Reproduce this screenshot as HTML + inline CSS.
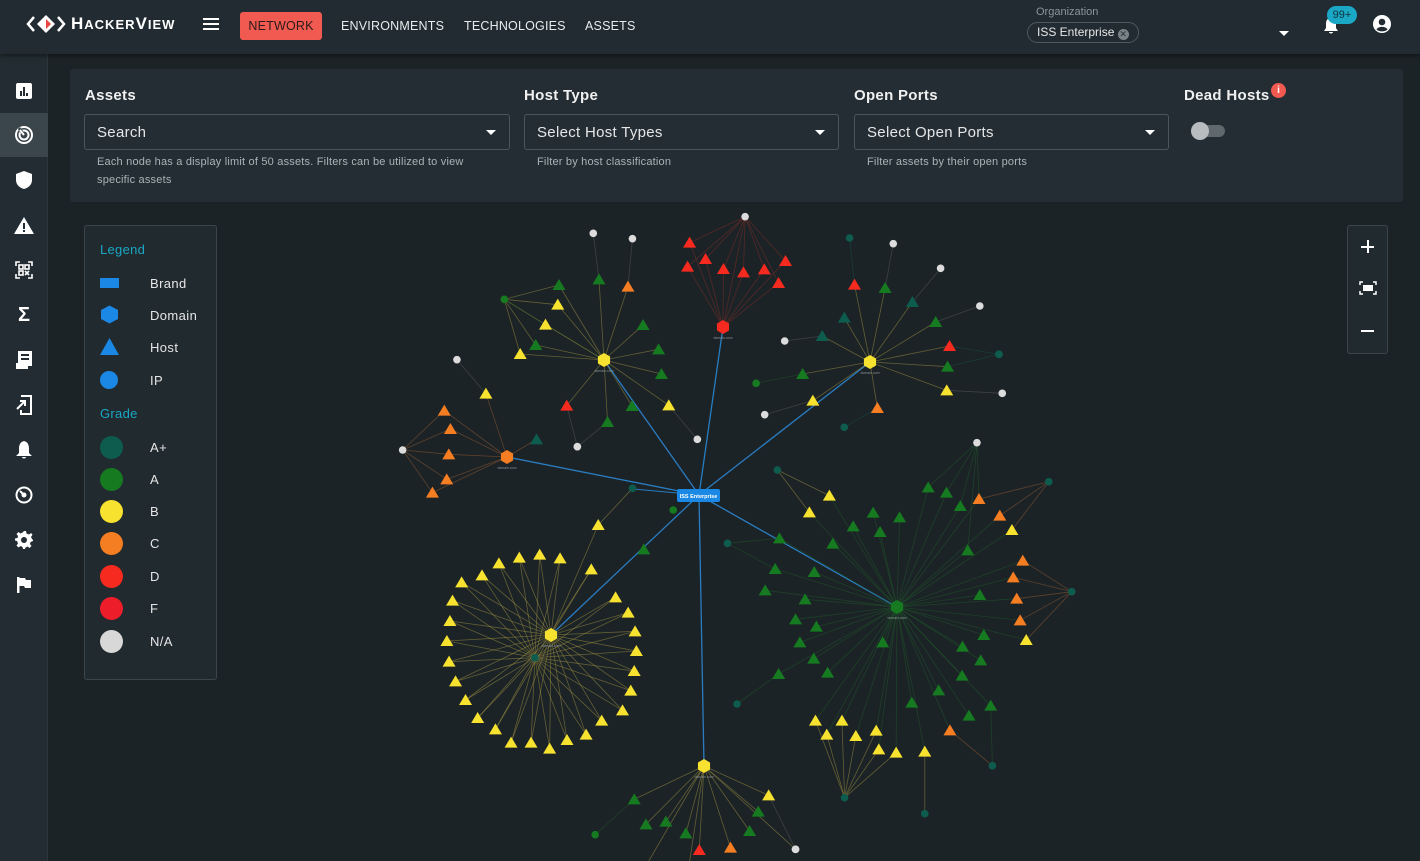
<!DOCTYPE html>
<html><head><meta charset="utf-8">
<style>
*{box-sizing:border-box;margin:0;padding:0}
body{width:1420px;height:861px;overflow:hidden;background:#1c2327;font-family:"Liberation Sans",sans-serif;color:#fff;position:relative}
.hdr{position:absolute;left:0;top:0;width:1420px;height:54px;background:#212b31;box-shadow:0 2px 4px rgba(0,0,0,.4);z-index:3}
.logo{position:absolute;left:27px;top:14px;font-size:18px;letter-spacing:1px;font-weight:bold}
.nav{position:absolute;top:12px;height:28px;line-height:28px;font-size:12.5px;color:#e8ecee;letter-spacing:.2px}
.side{position:absolute;left:0;top:54px;width:48px;height:807px;background:#222c32;border-right:1px solid #2c363c}
.si{position:absolute;left:0;width:48px;height:44px;display:flex;align-items:center;justify-content:center}
.panel{position:absolute;left:70px;top:69px;width:1333px;height:133px;background:#232d33;border-radius:3px}
.lbl{position:absolute;top:18px;font-size:15px;font-weight:bold;color:#f0f0f0;letter-spacing:.3px}
.sel{position:absolute;top:45px;height:36px;border:1px solid #4a555b;border-radius:3px;font-size:15px;color:#e6e6e6;padding:9px 12px;letter-spacing:.3px}
.sel:after{content:"";position:absolute;right:13px;top:15px;border-left:5px solid transparent;border-right:5px solid transparent;border-top:5px solid #fff}
.hint{position:absolute;top:84px;font-size:11px;color:#aab3b8;line-height:18px;letter-spacing:.2px}
.legend{position:absolute;left:84px;top:225px;width:133px;height:455px;border:1px solid #3b464c;border-radius:3px;background:#212a2f}
.lt{position:absolute;left:15px;font-size:13px;color:#19a7c4;letter-spacing:.3px}
.li{position:absolute;left:65px;font-size:13px;color:#e6e6e6;letter-spacing:.4px}
.zc{position:absolute;left:1347px;top:225px;width:41px;height:129px;border:1px solid #3b464c;border-radius:3px;background:#212a2f}
</style></head><body>
<div class="hdr">
  <svg style="position:absolute;left:26px;top:14px" width="40" height="20" viewBox="0 0 40 20"><path d="M8 3 L2 10 L8 17" stroke="#fff" stroke-width="2.5" fill="none"/><path d="M32 3 L38 10 L32 17" stroke="#fff" stroke-width="2.5" fill="none"/><path d="M20 1 L29 10 L20 19 L11 10Z" fill="#fff"/><path d="M20 5 L25 10 L20 15 Z" fill="#e8453c"/></svg>
  <div class="logo" style="left:71px;font-size:17px">H<span style="font-size:13px">ACKER</span>V<span style="font-size:13px">IEW</span></div>
  <div style="position:absolute;left:203px;top:18px;width:16px;height:2px;background:#fff;box-shadow:0 5px 0 #fff,0 10px 0 #fff"></div>
  <div class="nav" style="left:240px;width:82px;background:#f05a50;border-radius:3px;text-align:center;color:#2a1a1a">NETWORK</div>
  <div class="nav" style="left:341px">ENVIRONMENTS</div>
  <div class="nav" style="left:464px">TECHNOLOGIES</div>
  <div class="nav" style="left:585px">ASSETS</div>
  <div style="position:absolute;left:1036px;top:6px;font-size:11px;color:#8a959b">Organization</div>
  <div style="position:absolute;left:1027px;top:22px;width:112px;height:21px;border:1px solid #4d585e;border-radius:11px;font-size:12px;line-height:19px;padding-left:9px;color:#e8e8e8">ISS Enterprise <span style="display:inline-block;width:11px;height:11px;border-radius:50%;background:#7a8388;color:#2a3237;font-size:9px;line-height:11px;text-align:center;vertical-align:-1px">✕</span></div>
  <div style="position:absolute;left:1279px;top:31px;border-left:5px solid transparent;border-right:5px solid transparent;border-top:5px solid #fff"></div>
  <svg style="position:absolute;left:1322px;top:16px" width="18" height="20" viewBox="0 0 18 20"><path d="M9 2 C5 2 4 5 4 8 L4 12 L2 15 L16 15 L14 12 L14 8 C14 5 13 2 9 2Z M7 16 L11 16 C11 18 7 18 7 16Z" fill="#fff"/></svg>
  <div style="position:absolute;left:1327px;top:6px;width:30px;height:18px;border-radius:9px;background:#1aa8c6;font-size:11px;text-align:center;line-height:18px;color:#10323a">99+</div>
  <svg style="position:absolute;left:1372px;top:14px" width="20" height="20" viewBox="0 0 20 20"><circle cx="10" cy="10" r="9" fill="#fff"/><circle cx="10" cy="8" r="3.3" fill="#212b31"/><path d="M4.5 15.5 C6 12 14 12 15.5 15.5 C13 18 7 18 4.5 15.5Z" fill="#212b31"/></svg>
</div>
<div class="side">
  <div class="si" style="top:15px"><svg width="16" height="16"><rect width="16" height="16" rx="2" fill="#fff"/><rect x="4" y="8" width="2" height="5" fill="#222c32"/><rect x="7" y="4" width="2" height="9" fill="#222c32"/><rect x="10" y="10" width="2" height="3" fill="#222c32"/></svg></div>
  <div class="si" style="top:59px;background:#3a454c"><svg width="20" height="20" viewBox="0 0 20 20"><circle cx="10" cy="10" r="8" stroke="#fff" stroke-width="2" fill="none"/><circle cx="10" cy="10" r="4.5" stroke="#fff" stroke-width="2" fill="none"/><path d="M10 10 L5 3" stroke="#3a454c" stroke-width="3"/><path d="M10 10 L6 5" stroke="#fff" stroke-width="2"/></svg></div>
  <div class="si" style="top:104px"><svg width="16" height="18"><path d="M8 0 L16 3 L16 9 C16 14 12 17 8 18 C4 17 0 14 0 9 L0 3Z" fill="#fff"/></svg></div>
  <div class="si" style="top:149px"><svg width="20" height="17"><path d="M10 0 L20 17 L0 17Z" fill="#fff"/><rect x="9" y="6" width="2" height="6" fill="#222c32"/><rect x="9" y="13" width="2" height="2" fill="#222c32"/></svg></div>
  <div class="si" style="top:194px"><svg width="18" height="18" fill="none" stroke="#fff" stroke-width="1.6"><path d="M1 5V1H5M13 1H17V5M17 13V17H13M5 17H1V13"/><rect x="4" y="4" width="4" height="4"/><rect x="10" y="4" width="4" height="4"/><rect x="4" y="10" width="4" height="4"/><path d="M10 10L14 14M14 10L10 14"/></svg></div>
  <div class="si" style="top:239px;font-size:20px;font-weight:bold">Σ</div>
  <div class="si" style="top:284px"><svg width="16" height="18"><rect x="2" y="0" width="14" height="15" fill="#fff"/><rect x="0" y="12" width="12" height="6" fill="#fff"/><rect x="5" y="3" width="8" height="2" fill="#222c32"/><rect x="5" y="7" width="8" height="2" fill="#222c32"/></svg></div>
  <div class="si" style="top:329px"><svg width="16" height="20" fill="none" stroke="#fff" stroke-width="2"><path d="M5 1H15V19H5V15"/><path d="M1 14L9 6M4 6H9V11"/></svg></div>
  <div class="si" style="top:374px"><svg width="16" height="18"><path d="M8 0 C4 1 3 4 3 8 L3 12 L0 15 L16 15 L13 12 L13 8 C13 4 12 1 8 0Z M6 16 H10 C10 18 6 18 6 16Z" fill="#fff"/></svg></div>
  <div class="si" style="top:419px"><svg width="18" height="18" fill="none" stroke="#fff" stroke-width="2"><circle cx="9" cy="9" r="7.5"/><path d="M9 9L5 5"/><circle cx="9" cy="9" r="1.5" fill="#fff"/></svg></div>
  <div class="si" style="top:464px"><svg width="18" height="18" viewBox="0 0 18 18"><path d="M9 0 L11 0 L11.5 2.5 L14 3.5 L16 2 L17.5 3.8 L16 6 L17 8 L18 9 L18 10 L15.5 11 L15 13 L16.5 15 L14.5 17 L12.5 15.5 L10.5 16.5 L10 18 L8 18 L7.5 16 L5.5 15 L3.5 16.5 L1.5 14.5 L3 12.5 L2 10 L0 9.5 L0 7.5 L2.5 7 L3 5 L1.5 3 L3.5 1 L5.5 2.5 L7.5 1.5Z" fill="#fff"/><circle cx="9" cy="9" r="3" fill="#222c32"/></svg></div>
  <div class="si" style="top:509px"><svg width="14" height="16"><rect x="0" y="0" width="2.5" height="16" fill="#fff"/><path d="M2 1 H8 L9 3 H14 V11 H8 L7 9 H2Z" fill="#fff"/></svg></div>
</div>
<div class="panel">
  <div class="lbl" style="left:15px">Assets</div>
  <div class="sel" style="left:14px;width:426px">Search</div>
  <div class="hint" style="left:27px;width:405px">Each node has a display limit of 50 assets. Filters can be utilized to view specific assets</div>
  <div class="lbl" style="left:454px">Host Type</div>
  <div class="sel" style="left:454px;width:315px">Select Host Types</div>
  <div class="hint" style="left:467px">Filter by host classification</div>
  <div class="lbl" style="left:784px">Open Ports</div>
  <div class="sel" style="left:784px;width:315px">Select Open Ports</div>
  <div class="hint" style="left:797px">Filter assets by their open ports</div>
  <div class="lbl" style="left:1114px">Dead Hosts</div>
  <div style="position:absolute;left:1201px;top:14px;width:15px;height:15px;border-radius:50%;background:#f05a50;font-size:10px;text-align:center;line-height:15px;font-weight:bold">i</div>
  <div style="position:absolute;left:1123px;top:56px;width:32px;height:12px;border-radius:6px;background:#5f686d"></div>
  <div style="position:absolute;left:1121px;top:53px;width:18px;height:18px;border-radius:50%;background:#b8bcbe"></div>
</div>
<svg id="g" style="position:absolute;left:0;top:0" width="1420" height="861"></svg>
<div class="legend">
  <div class="lt" style="top:16px">Legend</div>
  <div style="position:absolute;left:15px;top:52px;width:19px;height:10px;background:#1a88e4"></div><div class="li" style="top:50px">Brand</div>
  <svg style="position:absolute;left:15px;top:79px" width="19" height="19"><polygon points="9.5,0.5 18,5 18,14 9.5,18.5 1,14 1,5" fill="#1a88e4"/></svg><div class="li" style="top:82px">Domain</div>
  <svg style="position:absolute;left:15px;top:112px" width="19" height="17"><polygon points="9.5,0 19,17 0,17" fill="#1a88e4"/></svg><div class="li" style="top:114px">Host</div>
  <div style="position:absolute;left:15px;top:145px;width:18px;height:18px;border-radius:50%;background:#1a88e4"></div><div class="li" style="top:147px">IP</div>
  <div class="lt" style="top:180px">Grade</div>
  <div style="position:absolute;left:15px;top:210px;width:23px;height:23px;border-radius:50%;background:#0d5c4e"></div><div class="li" style="top:214px">A+</div>
  <div style="position:absolute;left:15px;top:242px;width:23px;height:23px;border-radius:50%;background:#167a20"></div><div class="li" style="top:246px">A</div>
  <div style="position:absolute;left:15px;top:274px;width:23px;height:23px;border-radius:50%;background:#f7e22f"></div><div class="li" style="top:278px">B</div>
  <div style="position:absolute;left:15px;top:306px;width:23px;height:23px;border-radius:50%;background:#f57d22"></div><div class="li" style="top:310px">C</div>
  <div style="position:absolute;left:15px;top:339px;width:23px;height:23px;border-radius:50%;background:#f62a1f"></div><div class="li" style="top:343px">D</div>
  <div style="position:absolute;left:15px;top:371px;width:23px;height:23px;border-radius:50%;background:#ee1d2a"></div><div class="li" style="top:375px">F</div>
  <div style="position:absolute;left:15px;top:404px;width:23px;height:23px;border-radius:50%;background:#d8d8d8"></div><div class="li" style="top:408px">N/A</div>
</div>
<div class="zc">
  <div style="position:absolute;left:13px;top:20px;width:13px;height:2px;background:#fff"></div><div style="position:absolute;left:18.5px;top:14px;width:2px;height:13px;background:#fff"></div>
  <svg style="position:absolute;left:11px;top:55px" width="18" height="14" fill="none" stroke="#fff" stroke-width="1.5"><path d="M1 4V1H4M14 1H17V4M17 10V13H14M4 13H1V10"/><rect x="4" y="4" width="10" height="6" fill="#fff" stroke="none"/></svg>
  <div style="position:absolute;left:13px;top:104px;width:13px;height:2px;background:#fff"></div>
</div>
<script>
var C={y:'#f7e22f',g:'#167a20',t:'#0d5c4e',o:'#f57d22',r:'#f62a1f',w:'#dcdcdc'};
var E={y:'rgba(170,155,65,.5)',g:'rgba(30,100,40,.45)',t:'rgba(20,90,70,.45)',o:'rgba(160,95,50,.5)',r:'rgba(140,45,40,.5)',w:'rgba(120,120,120,.35)'};
function z5(x,y){return [390+x/2.45,210+y/3]}
function z6(x,y){return [420+x/2.306,480+y/3]}
var L='',N='';
function line(a,b,c,w){L+='<line x1="'+a[0]+'" y1="'+a[1]+'" x2="'+b[0]+'" y2="'+b[1]+'" stroke="'+c+'" stroke-width="'+(w||0.8)+'"/>';}
function tri(p,c){N+='<polygon points="'+p[0]+','+(p[1]-6)+' '+(p[0]+6.5)+','+(p[1]+5)+' '+(p[0]-6.5)+','+(p[1]+5)+'" fill="'+C[c]+'"/>';}
function dot(p,c){N+='<circle cx="'+p[0]+'" cy="'+p[1]+'" r="3.8" fill="'+C[c]+'"/>';}
function hex(p,c){var r=7,pt=[];for(var i=0;i<6;i++){var a=Math.PI/3*i+Math.PI/6;pt.push((p[0]+r*Math.cos(a))+','+(p[1]+r*Math.sin(a)));}N+='<polygon points="'+pt.join(' ')+'" fill="'+C[c]+'"/><text x="'+p[0]+'" y="'+(p[1]+12)+'" font-size="3.5" fill="#8a9499" text-anchor="middle" font-family="Liberation Sans">domain.com</text>';}
function node(p,k){var c=k[1];if(k[0]=='t')tri(p,c);else dot(p,c);}
function cl(P,pc,items,f,ec){items.forEach(function(it){var p=f(it[0],it[1]);line(P,p,ec||E[pc]);if(it[3]){var q=f(it[3][0],it[3][1]);line(p,q,E[it[3][2][1]]);node(q,it[3][2]);}node(p,it[2]);});hex(P,pc);}
var H=[699,495];
var R=[723,327],A=[604,360],B=[870,362],Cc=[507,457],D=[551,635],G=[897,607],F=[704,766];
[R,A,B,Cc,D,G,F].forEach(function(p){line(H,p,'#2a7cc0',1.3)});
line(H,[633,489],'#2a7cc0',1);
var rc=[[734,98,'tr'],[773,147,'tr'],[729,170,'tr'],[817,177,'tr'],[866,187,'tr'],[917,178,'tr'],[969,153,'tr'],[952,219,'tr']];
var wr=z5(870,20);rc.forEach(function(i){line(z5(i[0],i[1]),wr,E.r)});line(R,wr,E.r);
cl(R,'r',rc,z5);dot(wr,'w');
var td=z5(280,268);
[[414,225],[411,284],[381,344],[357,405],[319,432]].forEach(function(i){line(td,z5(i[0],i[1]),E.y)});line(td,A,E.g);
cl(A,'y',[[414,225,'tg'],[411,284,'ty'],[381,344,'ty'],[357,405,'tg'],[319,432,'ty'],[512,208,'tg',[498,70,'dw']],[583,230,'to',[594,86,'dw']],[620,345,'tg'],[658,418,'tg'],[665,492,'tg'],[683,586,'ty',[753,688,'dw']],[593,588,'tg'],[533,636,'tg',[459,710,'dw']],[433,587,'tr',[459,710,'dw']]],z5);dot(td,'g');
cl(B,'y',[[1138,224,'tr',[1126,84,'dt']],[1213,234,'tg',[1233,101,'dw']],[1280,276,'tt',[1349,175,'dw']],[1113,323,'tt'],[1337,336,'tg',[1445,288,'dw']],[1059,378,'tt',[967,393,'dw']],[1371,408,'tr',[1492,433,'dt']],[1366,470,'tg',[1492,433,'dt']],[1364,541,'ty',[1500,550,'dw']],[1011,492,'tg',[897,520,'dg']],[1036,572,'ty',[918,614,'dw']],[1194,594,'to',[1113,652,'dt']]],z5);
var wc=z5(31,720);
[[133,602],[148,657],[144,733],[139,808],[104,848]].forEach(function(i){line(wc,z5(i[0],i[1]),E.o)});
cl(Cc,'o',[[133,602,'to'],[148,657,'to'],[144,733,'to'],[139,808,'to'],[104,848,'to'],[235,551,'ty',[164,449,'dw']],[359,688,'tt']],z5);dot(wc,'w');
var dt=z6(265,533);
var dl=[[182,250],[229,233],[276,224],[323,235],[395,268],[143,286],[96,307],[75,362],[69,423],[62,483],[67,545],[82,604],[105,660],[133,714],[174,748],[210,788],[256,788],[299,806],[339,780],[383,764],[419,722],[467,691],[486,632],[494,573],[499,513],[496,454],[480,398],[451,352]];
dl.forEach(function(i){line(dt,z6(i[0],i[1]),E.y)});
var ty=z6(411,135),tt=z6(490,25);line(D,ty,E.y);line(ty,tt,E.y);
cl(D,'y',dl.map(function(i){return [i[0],i[1],'ty']}),z6);dot(dt,'t');tri(ty,'y');dot(tt,'t');
tri(z6(516,208),'g');dot(z6(584,90),'g');
var gl=[[1172,22],[1214,38],[1246,78],[1045,98],[1106,112],[999,139],[1061,156],[952,191],[1263,211],[819,267],[909,276],[796,331],[888,358],[1291,345],[866,418],[914,440],[876,487],[1067,487],[1300,465],[1251,500],[1293,541],[908,536],[940,578],[827,582],[1250,587],[1196,631],[1134,668],[1316,677],[1266,707],[829,175]];
var gw=z5(1438,698);[[1172,22],[1214,38],[1246,78],[1289,57],[1263,211]].forEach(function(i){line(gw,z6(i[0],i[1]),E.g)});
var gt1=z6(1450,5);[[1337,107],[1365,150],[1289,57]].forEach(function(i){line(gt1,z6(i[0],i[1]),E.o)});
var gt2=z6(1503,335);[[1390,242],[1368,292],[1376,356],[1384,421],[1398,480]].forEach(function(i){line(gt2,z6(i[0],i[1]),E.o)});
var gt3=z6(979,953);[[912,722],[973,722],[938,764],[1005,768],[1052,752],[1058,808],[1098,818]].forEach(function(i){line(gt3,z6(i[0],i[1]),E.y)});
var tl=z5(949,780);[[944,47],[898,97]].forEach(function(i){line(tl,z6(i[0],i[1]),E.y)});
var t7=z6(709,190);line(t7,z6(829,175),E.g);line(t7,z6(819,267),E.g);
var t8=z6(731,672);line(t8,z6(827,582),E.g);
var t9=z6(1320,857);line(t9,z6(1222,751),E.o);line(t9,z6(1316,677),E.g);
var t10=z6(1164,1001);line(t10,z6(1164,815),E.y);
var items=gl.map(function(i){return [i[0],i[1],'tg']});
[[1289,57,'to'],[1337,107,'to'],[1390,242,'to'],[1368,292,'to'],[1376,356,'to'],[1384,421,'to'],[1222,751,'to'],[1365,150,'ty'],[1398,480,'ty'],[912,722,'ty'],[973,722,'ty'],[938,764,'ty'],[1005,768,'ty'],[1052,752,'ty'],[1058,808,'ty'],[1098,818,'ty'],[944,47,'ty'],[898,97,'ty'],[1164,815,'ty']].forEach(function(i){items.push(i)});
cl(G,'g',items,z6);
[gt1,gt2,gt3,tl,t7,t8,t9,t10].forEach(function(p){dot(p,'t')});dot(gw,'w');
cl(F,'y',[[494,958,'tg',[404,1064,'dg']],[521,1033,'tg'],[567,1025,'tg'],[613,1060,'tg'],[760,1053,'tg'],[780,995,'tg'],[804,946,'ty',[866,1108,'dw']],[644,1110,'tr'],[716,1103,'to'],[866,1108,'dw'],[520,1160,'tg'],[620,1160,'tg']],z6);
N+='<rect x="677" y="489" width="43" height="13" rx="2" fill="#1a88e4"/><text x="698.5" y="498" font-size="5.5" fill="#fff" text-anchor="middle" font-family="Liberation Sans" font-weight="bold">ISS Enterprise</text>';
document.getElementById('g').innerHTML='<g>'+L+'</g><g>'+N+'</g>';
</script>
</body></html>
